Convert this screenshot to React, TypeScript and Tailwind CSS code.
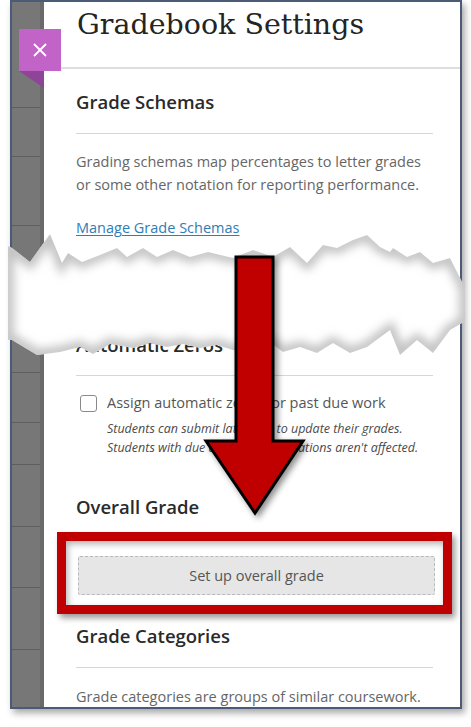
import React from 'react';

const sans = { fontFamily: '"Open Sans", "Noto Sans", sans-serif' };

function TornBand() {
  const top = [
    [8, 246], [12, 248], [30, 262], [50, 234], [62, 263], [68, 253], [82, 262], [100, 255], [117, 248],
    [127, 257], [143, 248], [157, 257], [173, 250], [190, 257], [208, 252], [233, 258], [253, 250],
    [273, 257], [290, 247], [307, 263], [323, 245], [337, 248], [353, 240], [367, 235], [380, 247],
    [390, 252], [393, 248], [407, 257], [420, 252], [433, 263], [450, 258], [462, 282], [465, 282],
  ];
  const bottom = [
    [465, 323], [462, 323], [450, 330], [433, 353], [417, 340], [400, 355], [390, 330], [367, 347],
    [350, 353], [333, 343], [317, 353], [300, 347], [283, 352], [267, 340], [253, 353], [233, 350],
    [217, 345], [200, 348], [183, 344], [167, 347], [150, 343], [133, 348], [110, 344], [93, 354],
    [80, 347], [60, 352], [37, 355], [12, 340], [8, 340],
  ];
  const pts = [...top, ...bottom].map(p => `${p[0]},${p[1] - 225}`).join(' ');
  return (
    <svg className="absolute left-0 top-[225px]" width="471" height="150" viewBox="0 0 471 150">
      <defs>
        <clipPath id="tear">
          <polygon points={pts} />
        </clipPath>
        <filter id="soft" x="-10%" y="-30%" width="120%" height="160%">
          <feGaussianBlur stdDeviation="5" />
        </filter>
      </defs>
      <polygon points={pts} fill="#ffffff" />
      <g clipPath="url(#tear)">
        <polygon points={pts} fill="none" stroke="#b4b4b4" strokeOpacity="0.8" strokeWidth="12" filter="url(#soft)" />
      </g>
    </svg>
  );
}

function Arrow() {
  return (
    <svg className="absolute left-0 top-0" width="471" height="727" viewBox="0 0 471 727">
      <defs>
        <filter id="ashadow" x="-20%" y="-20%" width="140%" height="140%">
          <feDropShadow dx="3" dy="3" stdDeviation="3" floodColor="#000" floodOpacity="0.45" />
        </filter>
      </defs>
      <polygon
        points="236,257 273,257 273,441 303,441 255,513 206,441 236,441"
        fill="#c00000"
        stroke="#000"
        strokeWidth="3"
        strokeLinejoin="miter"
        filter="url(#ashadow)"
      />
    </svg>
  );
}

export default function App() {
  return (
    <div className="relative w-[471px] h-[727px] bg-white overflow-hidden" style={sans}>
      <div className="ml-[10px] w-[452px] h-[709px] border-2 border-[#4b5a76] flex shadow-[3px_4px_7px_rgba(0,0,0,0.35)]">
        {/* course grid strip behind the panel */}
        <div className="w-[32px] h-full bg-[#777777] border-r-4 border-[#6a6a6a] flex flex-col">
          <div className="h-[106px] shrink-0 border-b border-[#5e5e5e]" />
          <div className="h-[49px] shrink-0 border-b border-[#5e5e5e]" />
          <div className="h-[69px] shrink-0 border-b border-[#5e5e5e]" />
          <div className="h-[147px] shrink-0 border-b border-[#5e5e5e]" />
          <div className="h-[50px] shrink-0 border-b border-[#5e5e5e]" />
          <div className="h-[42px] shrink-0 border-b border-[#5e5e5e]" />
          <div className="h-[62px] shrink-0 border-b border-[#5e5e5e]" />
          <div className="h-[61px] shrink-0 border-b border-[#5e5e5e]" />
          <div className="h-[62px] shrink-0 border-b border-[#5e5e5e]" />
        </div>

        <div className="flex-1 overflow-hidden">
          <div className="h-[67px] border-b-2 border-[#dedede] pl-[33px] pt-[5px]">
            <h1 className="text-[28.5px] leading-[36px] text-[#242424]" style={{ fontFamily: '"DejaVu Serif", "Liberation Serif", serif' }}>
              Gradebook Settings
            </h1>
          </div>

          <div className="pl-[32px] pr-[27px]">
            <h2 className="mt-[19px] text-[18.5px] leading-[28px] font-semibold text-[#2a2a2a]">Grade Schemas</h2>
            <div className="mt-[17px] border-t border-[#d6d6d6]" />
            <p className="mt-4 text-[14.5px] leading-[23px] text-[#666666]">
              Grading schemas map percentages to letter grades or some other notation for reporting performance.
            </p>
            <a className="block mt-[20px] text-[14.5px] leading-[23px] text-[#2f7db5] underline underline-offset-2">
              Manage Grade Schemas
            </a>

            <h2 className="mt-[92px] text-[18.5px] leading-[28px] font-semibold text-[#2a2a2a]">Automatic Zeros</h2>
            <div className="mt-4 border-t border-[#d6d6d6]" />
            <div className="mt-4 flex items-center gap-[10px] pl-[4px]">
              <span className="w-[17px] h-[17px] rounded-[3px] border-[1.5px] border-[#8a8a8a] bg-white" />
              <span className="text-[14.5px] leading-[22px] text-[#555555]">Assign automatic zeros for past due work</span>
            </div>
            <div className="mt-[5px] pl-[31px] text-[12.5px] leading-[19px] italic text-[#4a4a4a]">
              <p>Students can submit late work to update their grades.</p>
              <p>Students with due date accommodations aren't affected.</p>
            </div>

            <h2 className="mt-[36px] text-[18.5px] leading-[28px] font-semibold text-[#2a2a2a]">Overall Grade</h2>
            <button className="mt-[35px] ml-[2px] -mr-[2px] w-full h-[39px] bg-[#e6e6e6] border border-dashed border-[#b9b9b9] rounded-[2px] text-[14.5px] text-[#555555] flex items-center justify-center">
              Set up overall grade
            </button>

            <h2 className="mt-[27px] text-[18.5px] leading-[28px] font-semibold text-[#2a2a2a]">Grade Categories</h2>
            <div className="mt-[17px] border-t border-[#d6d6d6]" />
            <p className="mt-[17px] text-[14.5px] leading-[23px] text-[#666666]">
              Grade categories are groups of similar coursework.
            </p>
          </div>
        </div>
      </div>

      {/* close tab */}
      <button className="absolute left-[19px] top-[29px] w-[42px] h-[42px] bg-[#c263c8] flex items-center justify-center">
        <svg width="16" height="16" viewBox="0 0 16 16">
          <path d="M2 2 L14 14 M14 2 L2 14" stroke="#fff" strokeWidth="1.8" />
        </svg>
      </button>
      <svg className="absolute left-[19px] top-[71px]" width="25" height="17" viewBox="0 0 25 17">
        <polygon points="0,0 25,0 25,17" fill="#8e4597" />
      </svg>

      <TornBand />

      {/* highlight box */}
      <div className="absolute left-[57px] top-[532px] w-[395px] h-[82px] border-[9px] border-[#c00000] shadow-[inset_2px_3px_6px_rgba(0,0,0,0.3),3px_4px_6px_rgba(0,0,0,0.4)]" />

      <Arrow />
    </div>
  );
}
